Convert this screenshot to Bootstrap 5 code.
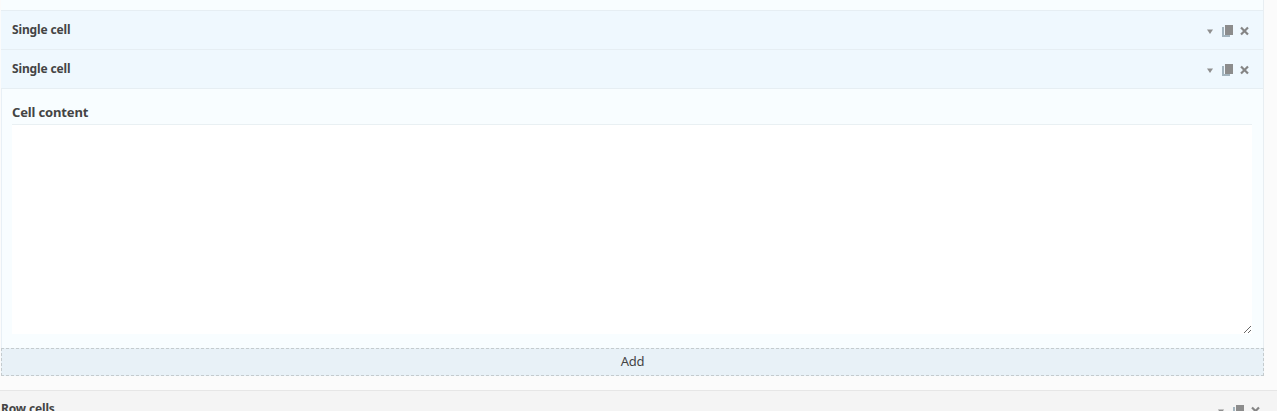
<!DOCTYPE html>
<html lang="en">
<head>
    <meta charset="UTF-8">
    <title>Row cells</title>
    <link href="https://cdn.jsdelivr.net/npm/bootstrap@5.3.0/dist/css/bootstrap.min.css" rel="stylesheet">
    <style>
        html, body { height: 411px; overflow: hidden; background: #fbfbfb; }
        body { font-family: "Noto Sans", "Open Sans", sans-serif; font-size: 13px; color: #444; }
        .cells-wrap { width: 1264px; padding-left: 1px; }
        .cells-top { height: 11px; background: #f8fdff; border-bottom: 1px solid #e6eef3; border-right: 1px solid #e8eef2; }
        .cell-head { height: 39px; padding: 0 14px 0 11px; background: #eff8fe; border-bottom: 1px solid #e6eef3; border-right: 1px solid #e8eef2; }
        .cell-title { font-size: 12px; font-weight: 700; color: #444; line-height: 1; letter-spacing: -0.15px; }
        .cell-body { height: 259px; padding: 0 11px 0 10px; background: #f8fdff; border-left: 1px solid #e8f0f6; border-right: 1px solid #e8eef2; }
        .cell-label { height: 36px; padding-top: 15px; font-size: 13px; font-weight: 700; line-height: 17px; color: #444; letter-spacing: -0.15px; border-bottom: 1px solid #e9f0f3; }
        .cell-text { display: block; width: 100%; height: 209px; border: 0; background: #fff; outline: 0; }
        .add-bar { height: 28px; width: 1263px; background: #e8f1f7; border: 1px dashed #c4cbce; font-size: 13px; color: #444; line-height: 25px; letter-spacing: -0.3px; text-align: center; }
        .row-head { height: 30px; margin-top: 14px; background: #f4f4f4; border-top: 1px solid #e6e6e6; padding: 10px 17px 0 1px; width: 1277px; margin-left: -1px; }
        .row-title { font-size: 12px; font-weight: 700; color: #444; line-height: 16px; letter-spacing: -0.15px; }
        .tool-icons { margin-top: 1px; }
        .tool-copy { margin: 0 7px 0 8px; }
    </style>
</head>
<body>
    <div class="cells-wrap">
        <div class="cells-top"></div>

        <div class="cell-head d-flex justify-content-between align-items-center">
            <span class="cell-title">Single cell</span>
            <div class="tool-icons d-flex align-items-center">
                <svg width="8" height="12" viewBox="0 0 8 12"><path d="M1 4.5h6L4 9z" fill="#8f8f8f"/></svg>
                <svg class="tool-copy" width="11" height="12" viewBox="0 0 11 12"><path d="M0 2h2v8h6v2H0z" fill="#a3b4be"/><path d="M3 0h8v10H3z" fill="#8c8c8c"/></svg>
                <svg width="9" height="12" viewBox="0 0 9 12"><path d="M1 2.5l7 7M8 2.5l-7 7" stroke="#858585" stroke-width="2.2"/></svg>
            </div>
        </div>

        <div class="cell-head d-flex justify-content-between align-items-center">
            <span class="cell-title">Single cell</span>
            <div class="tool-icons d-flex align-items-center">
                <svg width="8" height="12" viewBox="0 0 8 12"><path d="M1 4.5h6L4 9z" fill="#8f8f8f"/></svg>
                <svg class="tool-copy" width="11" height="12" viewBox="0 0 11 12"><path d="M0 2h2v8h6v2H0z" fill="#a3b4be"/><path d="M3 0h8v10H3z" fill="#8c8c8c"/></svg>
                <svg width="9" height="12" viewBox="0 0 9 12"><path d="M1 2.5l7 7M8 2.5l-7 7" stroke="#858585" stroke-width="2.2"/></svg>
            </div>
        </div>

        <div class="cell-body">
            <div class="cell-label">Cell content</div>
            <textarea class="cell-text" aria-label="Cell content"></textarea>
        </div>

        <div class="add-bar">Add</div>

        <div class="row-head d-flex justify-content-between">
            <span class="row-title">Row cells</span>
            <div class="tool-icons d-flex align-items-center">
                <svg width="8" height="12" viewBox="0 0 8 12"><path d="M1 4.5h6L4 9z" fill="#8f8f8f"/></svg>
                <svg class="tool-copy" width="11" height="12" viewBox="0 0 11 12"><path d="M0 2h2v8h6v2H0z" fill="#a3b4be"/><path d="M3 0h8v10H3z" fill="#8c8c8c"/></svg>
                <svg width="9" height="12" viewBox="0 0 9 12"><path d="M1 2.5l7 7M8 2.5l-7 7" stroke="#858585" stroke-width="2.2"/></svg>
            </div>
        </div>
    </div>
</body>
</html>
